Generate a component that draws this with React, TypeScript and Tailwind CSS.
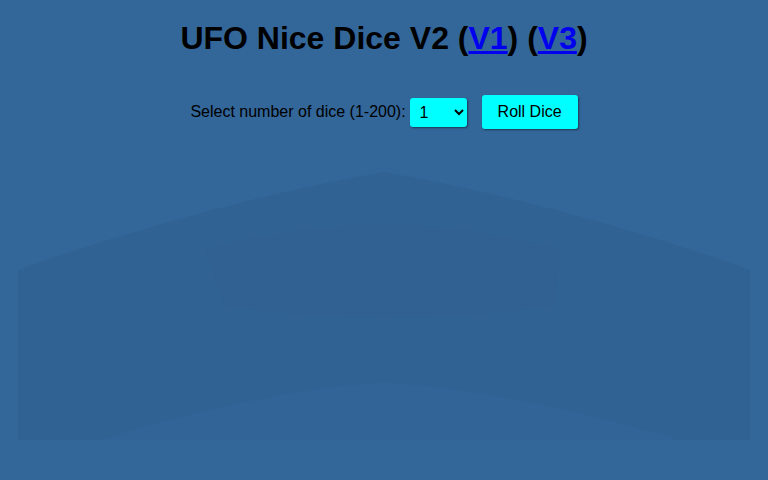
import { useState } from "react"

// faint saucer drawn behind the controls
const Saucer = () => (
  <svg
    className="pointer-events-none absolute left-0 top-0"
    width="768"
    height="480"
    viewBox="0 0 768 480"
  >
    <g fill="#2f5a8a" opacity="0.28">
      <path d="M18 270 Q200 205 384 172 Q568 205 750 270 L750 440 L18 440 Z" />
    </g>
    <g fill="#2f5a8a" opacity="0.14">
      <path d="M205 250 Q384 200 560 250 L555 305 Q384 330 225 305 Z" />
    </g>
    <g fill="#336699" opacity="0.5">
      <path d="M100 440 Q250 392 384 382 Q520 392 680 440 Z" />
    </g>
  </svg>
)

export default function App() {
  const [count, setCount] = useState("1")

  return (
    <div
      className="relative h-[480px] w-[768px] overflow-hidden bg-[#336699] text-black"
      style={{ fontFamily: '"Liberation Sans", Arial, sans-serif' }}
    >
      <Saucer />
      <div className="relative flex flex-col items-center">
        <h1 className="mt-[20px] text-[32px] font-bold leading-[37px]">
          UFO Nice Dice V2 (
          <a href="#" className="text-[#0000ee] underline">V1</a>
          ) (
          <a href="#" className="text-[#0000ee] underline">V3</a>
          )
        </h1>
        <div className="mt-[38px] flex items-center text-base">
          <label htmlFor="dice">Select number of dice (1-200):</label>
          <select
            id="dice"
            value={count}
            onChange={(e) => setCount(e.target.value)}
            className="ml-1 h-[29px] w-[57px] rounded-[3px] bg-[#00ffff] pl-[6px] text-base shadow-[1px_1px_2px_rgba(0,0,0,0.45)]"
          >
            {Array.from({ length: 200 }, (_, i) => (
              <option key={i + 1} value={String(i + 1)}>
                {i + 1}
              </option>
            ))}
          </select>
          <button className="ml-[15px] h-[34px] w-[96px] rounded-[3px] bg-[#00ffff] text-base shadow-[1px_1px_2px_rgba(0,0,0,0.45)]">
            Roll Dice
          </button>
        </div>
      </div>
    </div>
  )
}
